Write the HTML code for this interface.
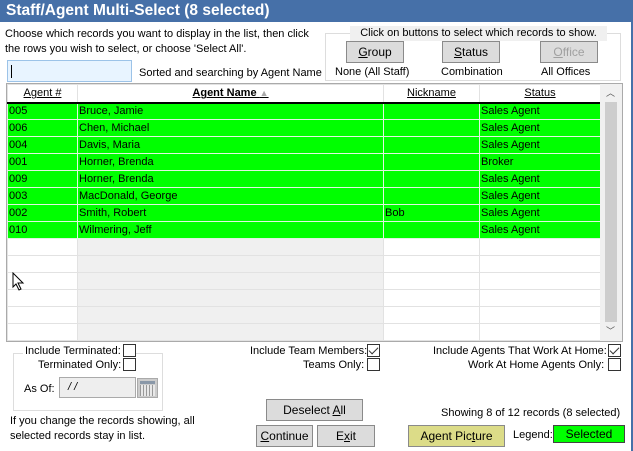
<!DOCTYPE html>
<html><head><meta charset="utf-8"><style>
*{box-sizing:border-box;margin:0;padding:0}
body{width:633px;height:451px;background:#fff;font-family:"Liberation Sans",Arial,sans-serif;font-size:11px;color:#000;position:relative;overflow:hidden}
.a{position:absolute;white-space:nowrap}
.btn{position:absolute;background:#dcdcdc;border:1px solid #8a8a8a;text-align:center;font-size:12px;line-height:20px}
.cb{position:absolute;width:13px;height:13px;border:1px solid #333;background:#fff}
.cb.c::after{content:"";position:absolute;left:3px;top:0px;width:4px;height:8px;border:solid #333;border-width:0 1.5px 1.5px 0;transform:rotate(45deg)}
table{border-collapse:collapse;position:absolute;left:7px;top:84px;table-layout:fixed}
td{height:17px;border:1px solid #e2e2e2;padding:0 0 0 1px;font-size:11px;white-space:nowrap;overflow:hidden;line-height:15px}
tr.g td{background:#00ff00;border-color:#e0f5e0}
tr.e td.n{background:#f0f0f0}
th{height:18px;font-weight:normal;text-decoration:underline;border:1px solid #e2e2e2;border-bottom:2px solid #000;font-size:11px}
</style></head><body>
<div class="a" style="left:0;top:0;width:633px;height:22px;background:#4670a8"></div>
<div class="a" style="left:631px;top:0;width:2px;height:451px;background:#4670a8"></div>
<div class="a" style="left:6px;top:2px;color:#fff;font-weight:bold;font-size:15.5px">Staff/Agent Multi-Select (8 selected)</div>
<div class="a" style="left:5px;top:27px;line-height:15px">Choose which records you want to display in the list, then click<br>the rows you wish to select, or choose 'Select All'.</div>
<div class="a" style="left:7px;top:60px;width:125px;height:22px;background:#e8f4ff;border:1px solid #9cc3e8"><div style="position:absolute;left:3px;top:4px;width:1px;height:13px;background:#000"></div></div>
<div class="a" style="left:139px;top:67px">Sorted and searching by Agent Name</div>
<div class="a" style="left:325px;top:33px;width:296px;height:48px;border:1px solid #ddd"></div>
<div class="a" style="left:350px;top:26px;width:257px;height:15px;background:#f0f0f0;text-align:center;line-height:15px">Click on buttons to select which records to show.</div>
<div class="btn" style="left:346px;top:41px;width:58px;height:22px"><u>G</u>roup</div>
<div class="btn" style="left:442px;top:41px;width:58px;height:22px"><u>S</u>tatus</div>
<div class="btn" style="left:540px;top:41px;width:58px;height:22px;color:#a0a0a0"><u>O</u>ffice</div>
<div class="a" style="left:335px;top:66px">None (All Staff)</div>
<div class="a" style="left:441px;top:66px">Combination</div>
<div class="a" style="left:541px;top:66px">All Offices</div>
<div class="a" style="left:6px;top:83px;width:617px;height:259px;border:1px solid #aaa"></div>
<table>
<colgroup><col style="width:70px"><col style="width:306px"><col style="width:96px"><col style="width:121px"></colgroup>
<tr><th>Agent #</th><th style="font-weight:bold">Agent Name <span style="text-decoration:none;color:#aaa;font-size:9px">▲</span></th><th>Nickname</th><th>Status</th></tr>
<tr class="g"><td>005</td><td>Bruce, Jamie</td><td></td><td>Sales Agent</td></tr>
<tr class="g"><td>006</td><td>Chen, Michael</td><td></td><td>Sales Agent</td></tr>
<tr class="g"><td>004</td><td>Davis, Maria</td><td></td><td>Sales Agent</td></tr>
<tr class="g"><td>001</td><td>Horner, Brenda</td><td></td><td>Broker</td></tr>
<tr class="g"><td>009</td><td>Horner, Brenda</td><td></td><td>Sales Agent</td></tr>
<tr class="g"><td>003</td><td>MacDonald, George</td><td></td><td>Sales Agent</td></tr>
<tr class="g"><td>002</td><td>Smith, Robert</td><td>Bob</td><td>Sales Agent</td></tr>
<tr class="g"><td>010</td><td>Wilmering, Jeff</td><td></td><td>Sales Agent</td></tr>
<tr class="e"><td></td><td class="n"></td><td></td><td></td></tr>
<tr class="e"><td></td><td class="n"></td><td></td><td></td></tr>
<tr class="e"><td></td><td class="n"></td><td></td><td></td></tr>
<tr class="e"><td></td><td class="n"></td><td></td><td></td></tr>
<tr class="e"><td></td><td class="n"></td><td></td><td></td></tr>
<tr class="e"><td></td><td class="n"></td><td></td><td></td></tr>
</table>
<div class="a" style="left:600px;top:84px;width:22px;height:257px;background:#f0f0f0"></div>
<div class="a" style="left:605px;top:102px;width:12px;height:220px;background:#cdcdcd"></div>
<div class="a" style="left:606px;top:86px;font-size:9px;color:#555">︿</div>
<div class="a" style="left:606px;top:324px;font-size:9px;color:#555">﹀</div>
<svg class="a" style="left:12px;top:272px" width="14" height="20"><path d="M1 1 L1 15 L4 12 L7 18 L9 17 L6 11 L11 11 Z" fill="#fff" stroke="#000"/></svg>
<div class="a" style="left:13px;top:353px;width:150px;height:58px;border:1px solid #ddd"></div>
<div class="a" style="left:23px;top:345px;background:#fff;padding:0 2px">Include Terminated:</div><div class="cb" style="left:123px;top:344px"></div>
<div class="a" style="left:38px;top:359px">Terminated Only:</div><div class="cb" style="left:123px;top:358px"></div>
<div class="a" style="left:24px;top:383px">As Of:</div>
<div class="a" style="left:59px;top:377px;width:77px;height:21px;background:#eee;border:1px solid #aaa;padding:3px 8px;font-style:italic">/ /</div>
<div class="a" style="left:137px;top:378px;width:21px;height:20px;background:#ccc;border:1px solid #aaa"><div style="margin:2px 2px 0;height:3px;background:#8a98a8"></div><div style="margin:1px 2px;height:11px;background:repeating-linear-gradient(90deg,#999 0 1px,#e8e8e8 1px 3px)"></div></div>
<div class="a" style="left:250px;top:345px">Include Team Members:</div><div class="cb c" style="left:367px;top:344px"></div>
<div class="a" style="left:303px;top:359px">Teams Only:</div><div class="cb" style="left:367px;top:358px"></div>
<div class="a" style="left:433px;top:345px">Include Agents That Work At Home:</div><div class="cb c" style="left:608px;top:344px"></div>
<div class="a" style="left:468px;top:359px">Work At Home Agents Only:</div><div class="cb" style="left:608px;top:358px"></div>
<div class="a" style="left:10px;top:414px;line-height:15px">If you change the records showing, all<br>selected records stay in list.</div>
<div class="btn" style="left:266px;top:399px;width:97px;height:22px">Deselect <u>A</u>ll</div>
<div class="btn" style="left:256px;top:425px;width:57px;height:22px"><u>C</u>ontinue</div>
<div class="btn" style="left:317px;top:425px;width:58px;height:22px">E<u>x</u>it</div>
<div class="a" style="left:441px;top:407px">Showing 8 of 12 records (8 selected)</div>
<div class="btn" style="left:408px;top:425px;width:97px;height:22px;background:#dcdc88">Agent Pic<u>t</u>ure</div>
<div class="a" style="left:513px;top:429px">Legend:</div>
<div class="a" style="left:553px;top:425px;width:72px;height:18px;background:#00ff00;border:1px solid #444;text-align:center;font-size:12px;line-height:16px">Selected</div>
</body></html>
